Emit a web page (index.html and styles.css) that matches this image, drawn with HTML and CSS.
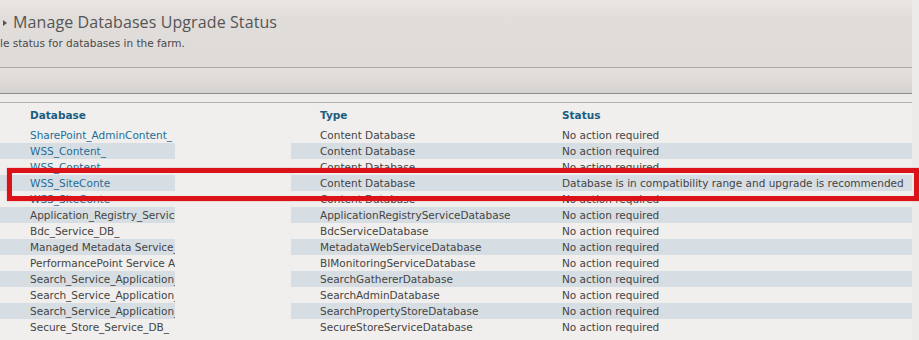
FILE: index.html
```html
<!DOCTYPE html>
<html lang="en">
<head>
    <meta charset="UTF-8">
    <title>Manage Databases Upgrade Status</title>
    <link rel="stylesheet" href="styles.css">
</head>
<body>
    <div class="page">
        <header class="title-area">
            <h1><span class="crumb-arrow"></span>Manage Databases Upgrade Status</h1>
            <p class="subtitle">le status for databases in the farm.</p>
        </header>
        <div class="toolbar"></div>
        <div class="toolbar-gap"></div>

        <section class="db-list">
            <div class="row head">
                <div class="cell name">Database</div>
                <div class="cell type">Type</div>
                <div class="cell status">Status</div>
            </div>
            <div class="row">
                <div class="cell name link">SharePoint_AdminContent_</div>
                <div class="cell type">Content Database</div>
                <div class="cell status">No action required</div>
            </div>
            <div class="row alt">
                <div class="cell name link">WSS_Content_</div>
                <div class="cell type">Content Database</div>
                <div class="cell status">No action required</div>
            </div>
            <div class="row">
                <div class="cell name link">WSS_Content</div>
                <div class="cell type">Content Database</div>
                <div class="cell status">No action required</div>
            </div>
            <div class="row alt">
                <div class="cell name link">WSS_SiteConte</div>
                <div class="cell type">Content Database</div>
                <div class="cell status">Database is in compatibility range and upgrade is recommended</div>
            </div>
            <div class="row">
                <div class="cell name link">WSS_SiteConte</div>
                <div class="cell type">Content Database</div>
                <div class="cell status">No action required</div>
            </div>
            <div class="row alt">
                <div class="cell name">Application_Registry_Service_DB_</div>
                <div class="cell type">ApplicationRegistryServiceDatabase</div>
                <div class="cell status">No action required</div>
            </div>
            <div class="row">
                <div class="cell name">Bdc_Service_DB_</div>
                <div class="cell type">BdcServiceDatabase</div>
                <div class="cell status">No action required</div>
            </div>
            <div class="row alt">
                <div class="cell name">Managed Metadata Service_</div>
                <div class="cell type">MetadataWebServiceDatabase</div>
                <div class="cell status">No action required</div>
            </div>
            <div class="row">
                <div class="cell name">PerformancePoint Service Application</div>
                <div class="cell type">BIMonitoringServiceDatabase</div>
                <div class="cell status">No action required</div>
            </div>
            <div class="row alt">
                <div class="cell name">Search_Service_Application_DB</div>
                <div class="cell type">SearchGathererDatabase</div>
                <div class="cell status">No action required</div>
            </div>
            <div class="row">
                <div class="cell name">Search_Service_Application_DB</div>
                <div class="cell type">SearchAdminDatabase</div>
                <div class="cell status">No action required</div>
            </div>
            <div class="row alt">
                <div class="cell name">Search_Service_Application_DB</div>
                <div class="cell type">SearchPropertyStoreDatabase</div>
                <div class="cell status">No action required</div>
            </div>
            <div class="row">
                <div class="cell name">Secure_Store_Service_DB_</div>
                <div class="cell type">SecureStoreServiceDatabase</div>
                <div class="cell status">No action required</div>
            </div>

            <!-- red annotation box drawn over the upgrade row -->
            <div class="callout"></div>
        </section>
    </div>
</body>
</html>
```

FILE: styles.css
```css
* {
    margin: 0;
    padding: 0;
    box-sizing: border-box;
}

html {
    background: #ecebe9;
}

body {
    font-family: 'DejaVu Sans', Verdana, sans-serif;
    font-size: 10.5px;
    color: #444;
    height: 340px;
    overflow: hidden;
}

.page {
    width: 912px;
    background: #f0efed;
    min-height: 340px;
}

/* Title Area */
.title-area {
    height: 68px;
    background: linear-gradient(180deg, #e9e6e3 0%, #e1ddda 25%, #dfdbd8 100%);
    border-bottom: 1px solid #aaa6a3;
    padding-top: 11px;
}

h1 {
    display: flex;
    align-items: center;
    font-family: 'Open Sans', 'Noto Sans', sans-serif;
    font-weight: 400;
    font-size: 16px;
    color: #555;
    height: 22px;
    letter-spacing: 0.1px;
}

.crumb-arrow {
    width: 0;
    height: 0;
    margin: 1px 6px 0 3px;
    border-top: 3px solid transparent;
    border-bottom: 3px solid transparent;
    border-left: 4px solid #555;
}

.subtitle {
    margin-top: 4px;
    color: #4a4a4a;
}

/* Toolbar Bands */
.toolbar {
    height: 26px;
    background: linear-gradient(180deg, #e4e1de 0%, #e0dcd9 40%, #d5d1ce 100%);
    border-bottom: 1px solid #8e8a87;
}

.toolbar-gap {
    height: 9px;
    background: #eeecea;
    border-bottom: 1px solid #b3afac;
}

/* Database List */
.db-list {
    position: relative;
}

.row {
    display: flex;
    height: 16px;
    line-height: 16px;
}

.row.head {
    height: 24px;
    line-height: 24px;
    font-weight: bold;
    color: #1b5d82;
}

.cell {
    white-space: nowrap;
    overflow: hidden;
}

.name {
    width: 175px;
    padding-left: 30px;
    margin-right: 116px;
}

.type {
    width: 242px;
    padding-left: 29px;
}

.status {
    flex: 1;
    padding-left: 29px;
}

.link {
    color: #1f6d97;
}

.row.alt .cell {
    background: #d7dee3;
}

.callout {
    position: absolute;
    left: 7px;
    top: 65px;
    width: 912px;
    height: 33px;
    border: 5px solid #dc1219;
    box-shadow: 0 0 1px rgba(220, 18, 25, 0.6);
}
```
